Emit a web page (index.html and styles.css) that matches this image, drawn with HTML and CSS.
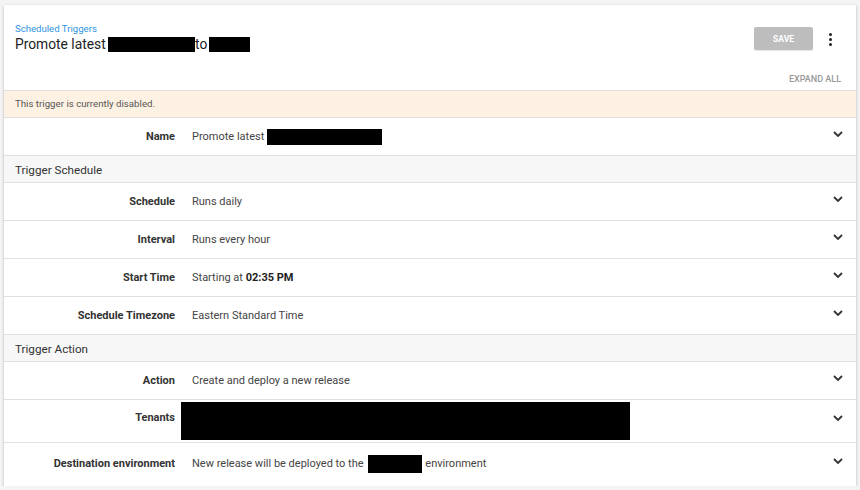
FILE: index.html
```html
<!DOCTYPE html>
<html>
<head>
    <title>Scheduled Trigger</title>
    <meta name="viewport" content="width=device-width, initial-scale=1.0">
    <link rel="stylesheet" href="styles.css">
</head>
<body>
    <div class="card">
        <div class="header">
            <div class="titles">
                <a class="crumb" href="#">Scheduled Triggers</a>
                <h1>Promote latest <span class="redact r-title1"></span>to<span class="redact r-title2"></span></h1>
            </div>
            <div class="actions">
                <button class="save" disabled>SAVE</button>
                <div class="kebab"><span></span><span></span><span></span></div>
            </div>
        </div>
        <div class="expand-row"><a href="#" class="expand-all">EXPAND ALL</a></div>

        <div class="banner">This trigger is currently disabled.</div>

        <div class="row">
            <div class="label">Name</div>
            <div class="value">Promote latest <span class="redact r-name"></span></div>
            <div class="chevron"><svg viewBox="0 0 10 6"><polyline points="1,1 5,5 9,1"/></svg></div>
        </div>

        <div class="section">Trigger Schedule</div>
        <div class="row">
            <div class="label">Schedule</div>
            <div class="value">Runs daily</div>
            <div class="chevron"><svg viewBox="0 0 10 6"><polyline points="1,1 5,5 9,1"/></svg></div>
        </div>
        <div class="row">
            <div class="label">Interval</div>
            <div class="value">Runs every hour</div>
            <div class="chevron"><svg viewBox="0 0 10 6"><polyline points="1,1 5,5 9,1"/></svg></div>
        </div>
        <div class="row">
            <div class="label">Start Time</div>
            <div class="value">Starting at <strong>02:35 PM</strong></div>
            <div class="chevron"><svg viewBox="0 0 10 6"><polyline points="1,1 5,5 9,1"/></svg></div>
        </div>
        <div class="row">
            <div class="label">Schedule Timezone</div>
            <div class="value">Eastern Standard Time</div>
            <div class="chevron"><svg viewBox="0 0 10 6"><polyline points="1,1 5,5 9,1"/></svg></div>
        </div>

        <div class="section">Trigger Action</div>
        <div class="row">
            <div class="label">Action</div>
            <div class="value">Create and deploy a new release</div>
            <div class="chevron"><svg viewBox="0 0 10 6"><polyline points="1,1 5,5 9,1"/></svg></div>
        </div>
        <div class="row row-tenants">
            <div class="label">Tenants</div>
            <div class="value"><span class="redact r-tenants"></span></div>
            <div class="chevron"><svg viewBox="0 0 10 6"><polyline points="1,1 5,5 9,1"/></svg></div>
        </div>
        <div class="row row-last">
            <div class="label">Destination environment</div>
            <div class="value">New release will be deployed to the <span class="redact r-env"></span>environment</div>
            <div class="chevron"><svg viewBox="0 0 10 6"><polyline points="1,1 5,5 9,1"/></svg></div>
        </div>
    </div>
</body>
</html>
```

FILE: styles.css
```css
body {
    font-family: Roboto, 'Liberation Sans', Arial, sans-serif;
    background: #f4f4f4;
    color: #333;
    margin: 0;
    padding: 5px 4px 0 4px;
}
.card {
    background: #fff;
    box-shadow: 0 1px 3px rgba(0,0,0,0.25);
    width: 852px;
    height: 481px;
    box-sizing: border-box;
}
.header {
    display: flex;
    justify-content: space-between;
    height: 64px;
    padding: 17px 0 0 11px;
    box-sizing: border-box;
}
.crumb {
    display: block;
    font-size: 9.6px;
    line-height: 14px;
    color: #2f93e0;
    text-decoration: none;
}
h1 {
    margin: 0;
    font-size: 13.8px;
    line-height: 17px;
    font-weight: 400;
    color: #222;
    display: flex;
    align-items: center;
    white-space: pre;
}
.redact {
    display: inline-block;
    background: #000;
}
.r-title1 { width: 87px; height: 15px; margin-left: -1px; }
.r-title2 { width: 41px; height: 15px; margin-left: 2px; }
.r-name { width: 115px; height: 16px; vertical-align: middle; margin-left: 0; }
.r-tenants { width: 449px; height: 38px; display: block; }
.r-env { width: 54px; height: 18px; vertical-align: middle; margin: 0 3px 0 2px; }
.actions {
    display: flex;
    align-items: flex-start;
    padding-top: 5px;
    padding-right: 24px;
}
.save {
    width: 59px;
    height: 23px;
    border: none;
    border-radius: 2px;
    background: #bdbdbd;
    color: #fff;
    font-family: inherit;
    font-size: 8.5px;
    font-weight: 700;
    padding: 0;
    box-shadow: 0 1px 1px rgba(0,0,0,0.1);
}
.kebab {
    display: flex;
    flex-direction: column;
    gap: 2px;
    margin-left: 16px;
    padding-top: 6px;
}
.kebab span {
    width: 3px;
    height: 3px;
    background: #222;
    border-radius: 50%;
}
.expand-row {
    display: flex;
    justify-content: flex-end;
    height: 21px;
    padding-right: 15px;
}
.expand-all {
    font-size: 9px;
    color: #999;
    text-decoration: none;
    font-weight: 500;
    line-height: 20px;
}
.banner {
    background: #fdf1e3;
    border-top: 1px solid #e0e0e0;
    border-bottom: 1px solid #e0e0e0;
    height: 28px;
    box-sizing: border-box;
    padding-left: 11px;
    font-size: 9.7px;
    line-height: 25px;
    color: #555;
}
.row {
    display: flex;
    align-items: center;
    height: 38px;
    border-bottom: 1px solid #e0e0e0;
    box-sizing: border-box;
    font-size: 11px;
}
.label {
    width: 171px;
    text-align: right;
    font-weight: 700;
    color: #333;
    flex-shrink: 0;
}
.value {
    flex: 1;
    padding-left: 17px;
    color: #444;
    display: flex;
    align-items: center;
    white-space: pre;
}
.value strong { color: #222; }
.chevron {
    width: 10px;
    height: 6px;
    margin-right: 13px;
    margin-top: -6px;
    display: flex;
}
.chevron svg {
    width: 10px;
    height: 6px;
    fill: none;
    stroke: #333;
    stroke-width: 1.8;
}
.section {
    background: #f7f7f7;
    border-bottom: 1px solid #e0e0e0;
    height: 27px;
    box-sizing: border-box;
    padding-left: 11px;
    padding-top: 1px;
    font-size: 11.7px;
    line-height: 26px;
    color: #333;
}
.row-tenants {
    height: 43px;
}
.row-tenants .value { padding-left: 6px; }
.row-tenants .label { margin-top: -7px; }
.row-last {
    height: 41px;
    border-bottom: none;
}
```
